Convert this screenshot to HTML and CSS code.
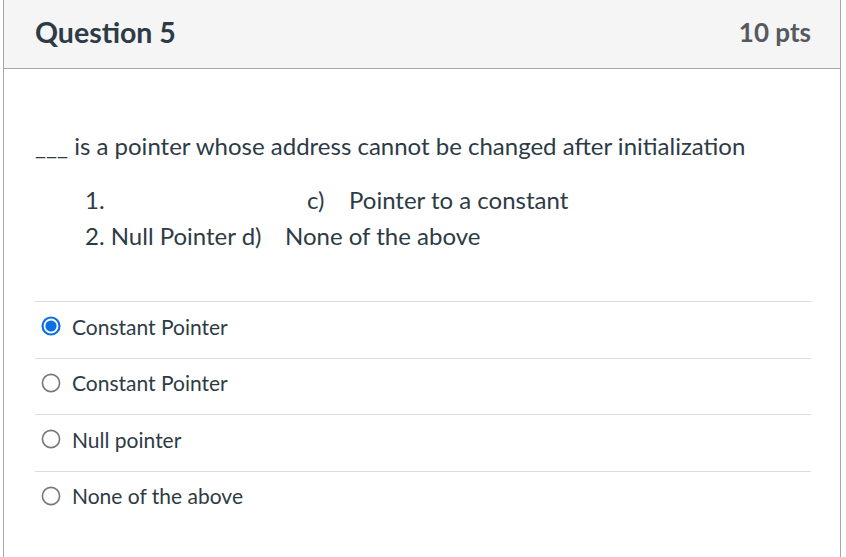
FILE: index.html
```html
<!DOCTYPE html>
<html>
<head>
<meta charset="utf-8">
<link rel="stylesheet" href="styles.css">
</head>
<body>
<div class="question">
  <div class="header">
    <h2 class="title">Question 5</h2>
    <div class="points">10 pts</div>
  </div>
  <div class="content">
    <p class="prompt">___ is a pointer whose address cannot be changed after initialization</p>
    <div class="sublist">
      <div class="line"><span class="c1">1.</span><span class="c2">c)</span><span>Pointer to a constant</span></div>
      <div class="line"><span class="c1b">2. Null Pointer d)</span><span>None of the above</span></div>
    </div>
    <div class="answers">
      <div class="answer">
        <svg class="radio" width="20" height="20" viewBox="0 0 20 20"><circle cx="10" cy="10" r="8.5" fill="#fff" stroke="#0b6fe6" stroke-width="2.2"/><circle cx="10" cy="10" r="5.6" fill="#0b6fe6"/></svg>
        <span class="label">Constant Pointer</span>
      </div>
      <div class="answer">
        <svg class="radio" width="20" height="20" viewBox="0 0 20 20"><circle cx="10" cy="10" r="8.6" fill="#fff" stroke="#777" stroke-width="1.6"/></svg>
        <span class="label">Constant Pointer</span>
      </div>
      <div class="answer">
        <svg class="radio" width="20" height="20" viewBox="0 0 20 20"><circle cx="10" cy="10" r="8.6" fill="#fff" stroke="#777" stroke-width="1.6"/></svg>
        <span class="label">Null pointer</span>
      </div>
      <div class="answer">
        <svg class="radio" width="20" height="20" viewBox="0 0 20 20"><circle cx="10" cy="10" r="8.6" fill="#fff" stroke="#777" stroke-width="1.6"/></svg>
        <span class="label">None of the above</span>
      </div>
    </div>
  </div>
</div>
</body>
</html>
```
FILE: styles.css
```css
* { box-sizing: border-box; }
html, body { margin: 0; padding: 0; background: #fff; }
body {
  font-family: Lato, "Noto Sans", sans-serif;
  color: #2d3b45;
  height: 557px;
  overflow: hidden;
}
.question {
  margin-left: 3px;
  width: 838px;
  border-left: 1px solid #a6a6a6;
  border-right: 1px solid #a6a6a6;
  min-height: 600px;
}
.header {
  display: flex;
  justify-content: space-between;
  align-items: center;
  height: 69px;
  background: #f5f5f5;
  border-bottom: 1px solid #a6a6a6;
  padding: 0 29px 4px 31px;
}
.title {
  margin: 0;
  font-size: 28.5px;
  font-weight: 700;
  color: #2d3b45;
}
.points {
  font-size: 26px;
  font-weight: 700;
  color: #555a5e;
}
.content {
  padding: 0 29px 0 31px;
}
.prompt {
  margin: 0;
  padding-top: 60px;
  font-size: 24px;
  line-height: 33px;
}
.sublist {
  margin-top: 20px;
  padding-left: 50px;
  font-size: 24px;
  line-height: 36px;
}
.line { display: flex; }
.c1 { width: 222px; }
.c2 { width: 42px; }
.c1b { width: 200px; }
.answers {
  margin-top: 47px;
}
.answer {
  display: flex;
  align-items: center;
  height: 56.5px;
  border-top: 1px solid #dcdcdc;
  padding-left: 6px;
  padding-bottom: 7px;
}
.radio { flex: none; margin-right: 11px; }
.label {
  font-size: 21px;
}
```
